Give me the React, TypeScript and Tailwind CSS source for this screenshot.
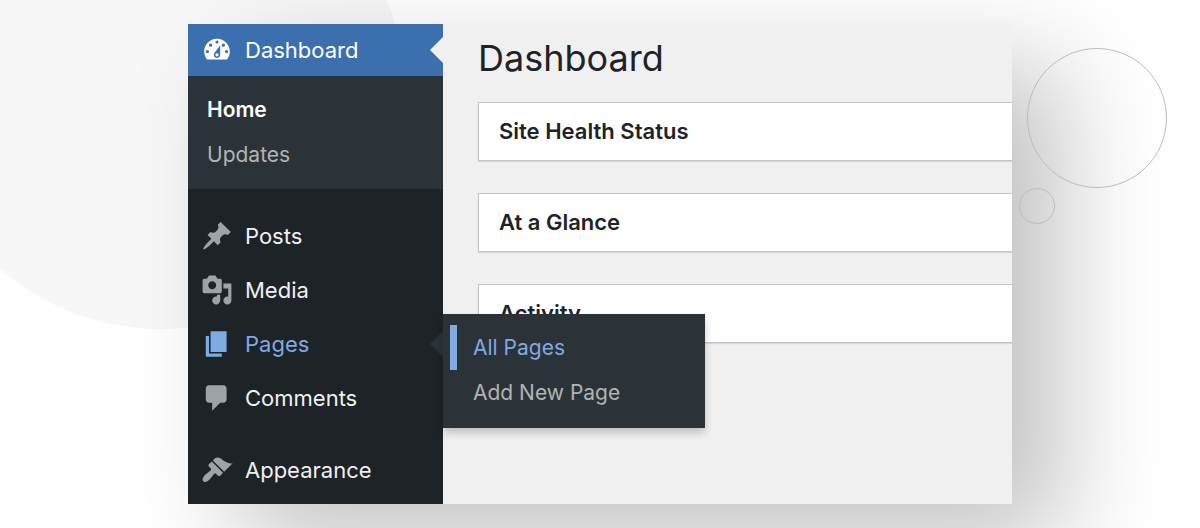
import React from 'react';
import clsx from 'clsx';

const icons = {
  dashboard:
    'M3.76 16h12.48c1.1-1.37 1.76-3.11 1.76-5 0-4.42-3.58-8-8-8s-8 3.58-8 8c0 1.89.66 3.63 1.76 5zM10 4c.55 0 1 .45 1 1s-.45 1-1 1-1-.45-1-1 .45-1 1-1zM6 6c.55 0 1 .45 1 1s-.45 1-1 1-1-.45-1-1 .45-1 1-1zm8 0c.55 0 1 .45 1 1s-.45 1-1 1-1-.45-1-1 .45-1 1-1zm-5.37 5.55L12 7v6c0 1.1-.9 2-2 2s-2-.9-2-2c0-.57.24-1.08.63-1.45zM4 10c.55 0 1 .45 1 1s-.45 1-1 1-1-.45-1-1 .45-1 1-1zm12 0c.55 0 1 .45 1 1s-.45 1-1 1-1-.45-1-1 .45-1 1-1zm-5 3c0-.55-.45-1-1-1s-1 .45-1 1 .45 1 1 1 1-.45 1-1z',
  posts:
    'M10.44 3.02l1.82-1.82 6.36 6.35-1.83 1.82c-1.05-.68-2.48-.57-3.41.36l-.75.75c-.92.93-1.04 2.35-.35 3.41l-1.83 1.82-2.41-2.41-2.8 2.79c-.42.42-3.38 2.71-3.8 2.29s1.86-3.39 2.28-3.81l2.79-2.79L4.1 9.36l1.83-1.82c1.05.69 2.48.57 3.4-.36l.75-.75c.93-.92 1.05-2.35.36-3.41z',
  media:
    'M13 11V4c0-.55-.45-1-1-1h-1.67L9 1H5L3.67 3H2c-.55 0-1 .45-1 1v7c0 .55.45 1 1 1h10c.55 0 1-.45 1-1zM7 4.5c1.38 0 2.5 1.12 2.5 2.5S8.38 9.5 7 9.5 4.5 8.38 4.5 7 5.62 4.5 7 4.5zM14 6h5v10.5c0 1.38-1.12 2.5-2.5 2.5S14 17.88 14 16.5s1.12-2.5 2.5-2.5c.17 0 .34.02.5.05V9h-3V6zm-4 8.05V13h2v3.5c0 1.38-1.12 2.5-2.5 2.5S7 17.88 7 16.5 8.12 14 9.5 14c.17 0 .34.02.5.05z',
  pages: 'M6 15V2h10v13H6zm-1 1h8v2H3V5h2v11z',
  comments: 'M5 2h9c1.1 0 2 .9 2 2v7c0 1.1-.9 2-2 2h-2l-5 5v-5H5c-1.1 0-2-.9-2-2V4c0-1.1.9-2 2-2z',
  appearance:
    'M14.48 11.06L7.41 3.99l1.5-1.5c.5-.56 2.3-.47 3.51.32 1.21.8 1.43 1.28 2.91 2.1 1.18.64 2.45 1.26 4.45.85zm-.71.71L6.7 4.7 4.93 6.47c-.39.39-.39 1.02 0 1.41l1.06 1.06c.39.39.39 1.03 0 1.42-.6.6-1.43 1.11-2.21 1.69-.35.26-.7.53-1.01.84C1.43 14.23.4 16.08 1.4 17.07c.99 1 2.84-.03 4.18-1.36.31-.31.58-.66.85-1.02.57-.78 1.08-1.61 1.69-2.21.39-.39 1.02-.39 1.41 0l1.06 1.06c.39.39 1.02.39 1.41 0z',
};

const MenuIcon: React.FC<{ name: keyof typeof icons; className: string }> = ({ name, className }) => (
  <svg viewBox="0 0 20 20" className={clsx('size-8 shrink-0', className)} fill="currentColor" aria-hidden="true">
    <path fillRule="evenodd" d={icons[name]} />
  </svg>
);

// Little triangle that points back at the open menu item
const Pointer: React.FC<{ className: string }> = ({ className }) => (
  <svg
    viewBox="0 0 13 26"
    className={clsx('absolute right-0 top-1/2 -translate-y-1/2 w-[13px] h-[26px]', className)}
    fill="currentColor"
    aria-hidden="true"
  >
    <path d="M13 0v26L0 13z" />
  </svg>
);

interface MenuItemProps {
  icon: keyof typeof icons;
  label: string;
  active?: boolean;
  children?: React.ReactNode;
}

const MenuItem: React.FC<MenuItemProps> = ({ icon, label, active, children }) => (
  <li className="relative">
    <a
      href="#"
      className={clsx(
        'flex items-center gap-3 h-[54px] pl-[13px] text-[22px]',
        active ? 'text-[#7faae2]' : 'text-[#f0f0f1]'
      )}
    >
      <MenuIcon name={icon} className={active ? 'text-[#7faae2]' : 'text-[#9ea3a8]'} />
      {label}
    </a>
    {children}
  </li>
);

const boxes = ['Site Health Status', 'At a Glance', 'Activity'];

export default function App() {
  return (
    <div className="relative min-h-screen overflow-hidden bg-white px-[188px] py-6 font-['Inter',sans-serif]">
      <div className="absolute -left-[83px] -top-[157px] size-[486px] rounded-full bg-[#f7f7f7]" />

      <div className="relative flex bg-[#f0f0f1] shadow-[50px_40px_100px_rgba(0,0,0,0.24)]">
        <nav className="relative z-10 w-[255px] shrink-0 bg-[#1d2327] pb-[7px]">
          <a href="#" className="relative flex items-center gap-3 h-[52px] pl-[13px] bg-[#3b6fae] text-white text-[22px]">
            <MenuIcon name="dashboard" className="text-white" />
            Dashboard
            <Pointer className="text-[#f0f0f1]" />
          </a>
          <ul className="bg-[#2c3338] pt-[11px] pb-3 text-[21px]">
            <li>
              <a href="#" className="flex items-center h-[45px] pl-[19px] font-semibold text-white">Home</a>
            </li>
            <li>
              <a href="#" className="flex items-center h-[45px] pl-[19px] text-[#b0b3b6]">Updates</a>
            </li>
          </ul>

          <ul className="pt-5">
            <MenuItem icon="posts" label="Posts" />
            <MenuItem icon="media" label="Media" />
            <MenuItem icon="pages" label="Pages" active>
              <Pointer className="text-[#2c3338]" />
              <ul className="absolute left-full -top-[3px] w-[262px] bg-[#2c3338] pt-[11px] pb-[13px] text-[21px] shadow-[0_5px_8px_rgba(0,0,0,0.2)]">
                <li className="pl-[7px]">
                  <a href="#" className="flex items-center h-[45px] pl-4 border-l-[7px] border-[#7faae2] text-[#7faae2]">
                    All Pages
                  </a>
                </li>
                <li className="pl-[7px]">
                  <a href="#" className="flex items-center h-[45px] pl-4 border-l-[7px] border-transparent text-[#b0b3b6]">
                    Add New Page
                  </a>
                </li>
              </ul>
            </MenuItem>
            <MenuItem icon="comments" label="Comments" />
          </ul>
          <ul className="pt-[18px]">
            <MenuItem icon="appearance" label="Appearance" />
          </ul>
        </nav>

        <main className="flex-1 min-w-0 pl-[35px] pt-3 text-[#1d2327]">
          <h1 className="text-[36px] leading-[44px]">Dashboard</h1>
          <div className="mt-[22px] flex flex-col gap-8">
            {boxes.map(title => (
              <section
                key={title}
                className="flex items-center h-[59px] pl-5 bg-white border border-r-0 border-[#c3c4c7] shadow-[0_1px_1px_rgba(0,0,0,0.1)]"
              >
                <h2 className="text-[22px] font-semibold">{title}</h2>
              </section>
            ))}
          </div>
        </main>
      </div>

      <div className="absolute right-[33px] top-12 size-[140px] rounded-full border border-[#bcbcbc]" />
      <div className="absolute right-[145px] top-[188px] size-9 rounded-full border border-[#bcbcbc]" />
    </div>
  );
}
